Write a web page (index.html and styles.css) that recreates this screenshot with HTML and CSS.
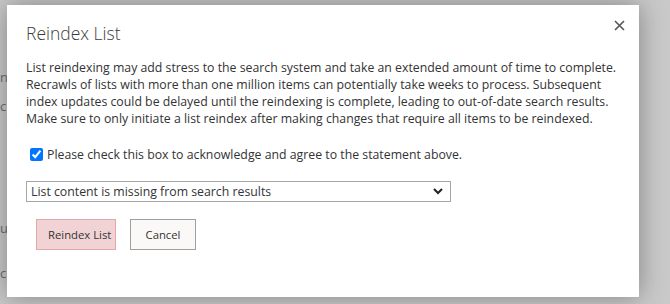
FILE: index.html
```html
<!DOCTYPE html>
<html lang="en">
<head>
  <meta charset="UTF-8" />
  <title>Reindex List</title>
  <link rel="stylesheet" href="styles.css">
</head>
<body>
  <!-- page behind the overlay -->
  <div class="page">
    <div class="page-line line-1">n</div>
    <div class="page-line line-2">c</div>
    <div class="page-line line-3">ul</div>
    <div class="page-line line-4">c</div>
  </div>

  <div class="dialog">
    <button class="close" aria-label="Close">
      <svg width="11" height="11" viewBox="0 0 11 11"><path d="M1 1 L10 10 M10 1 L1 10" stroke="#555" stroke-width="1.6"/></svg>
    </button>
    <h1 class="title">Reindex List</h1>
    <p class="warning">
      List reindexing may add stress to the search system and take an extended amount of time to complete.<br>
      Recrawls of lists with more than one million items can potentially take weeks to process. Subsequent<br>
      index updates could be delayed until the reindexing is complete, leading to out-of-date search results.<br>
      Make sure to only initiate a list reindex after making changes that require all items to be reindexed.
    </p>
    <label class="ack">
      <input type="checkbox" checked>
      Please check this box to acknowledge and agree to the statement above.
    </label>
    <div class="select">
      <span>List content is missing from search results</span>
      <svg width="10" height="7" viewBox="0 0 10 7"><path d="M1 1 L5 5 L9 1" fill="none" stroke="#222" stroke-width="2"/></svg>
    </div>
    <div class="actions">
      <button class="btn btn-primary">Reindex List</button>
      <button class="btn">Cancel</button>
    </div>
  </div>
</body>
</html>
```

FILE: styles.css
```css
body {
  margin: 0;
  height: 304px;
  background: #c9c9c9;
  font-family: 'Open Sans', 'Noto Sans', sans-serif;
  overflow: hidden;
  position: relative;
}

.page {
  padding-top: 68px;
  color: #6b6b6b;
  font-size: 13px;
}

.page-line {
  height: 29px;
}

.line-3 { margin-top: 93px; }
.line-4 { margin-top: 16px; }

.dialog {
  position: absolute;
  left: 7px;
  top: 5px;
  width: 632px;
  height: 292px;
  box-sizing: border-box;
  background: #fff;
  padding: 14px 19px;
  box-shadow: 0 0 24px rgba(0, 0, 0, 0.35);
  color: #333;
}

.close {
  position: absolute;
  right: 14px;
  top: 15px;
  border: none;
  background: none;
  padding: 0;
  width: 11px;
  height: 11px;
}

.close svg { display: block; }

.title {
  margin: 0;
  font-size: 17.5px;
  font-weight: 300;
  color: #3c3c3c;
  line-height: 28px;
}

.warning {
  margin: 12px 0 0;
  font-size: 12.3px;
  line-height: 17px;
  color: #333;
  white-space: nowrap;
}

.ack {
  display: flex;
  align-items: center;
  margin-top: 19px;
  font-size: 12.3px;
  line-height: 17px;
  color: #333;
}

.ack input {
  margin: 0 4px 0 4px;
  width: 13px;
  height: 13px;
}

.select {
  display: flex;
  align-items: center;
  justify-content: space-between;
  width: 425px;
  height: 21px;
  box-sizing: border-box;
  border: 1px solid #a6a6a6;
  margin-top: 18px;
  padding: 0 7px 0 4px;
  font-size: 12.3px;
  color: #333;
}

.actions {
  display: flex;
  gap: 14px;
  margin-top: 17px;
  padding-left: 10px;
}

.btn {
  height: 31px;
  padding: 0 11px;
  min-width: 66px;
  border: 1px solid #a19f9d;
  background: #faf9f8;
  font-family: inherit;
  font-size: 11.3px;
  color: #333;
  white-space: nowrap;
}

.btn-primary {
  width: 80px;
  background: #f1d3d5;
  border-color: #e6a6aa;
}
```
